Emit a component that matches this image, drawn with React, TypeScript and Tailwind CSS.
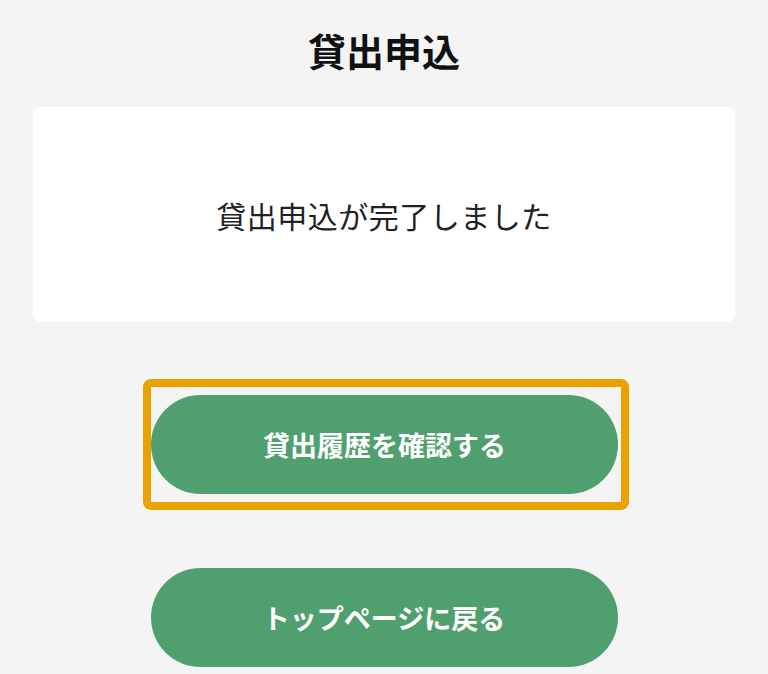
export default function App() {
  const font = { fontFamily: '"Noto Sans CJK JP", "Noto Sans", sans-serif' };
  return (
    <div className="min-h-[674px] w-full bg-[#f4f4f4] flex flex-col items-center" style={font}>
      <h1 className="mt-[26px] h-[48px] flex items-center text-[38px] leading-none font-bold text-[#111]">貸出申込</h1>
      <div className="mt-[33px] w-[702px] h-[215px] bg-white rounded-[8px] flex items-center justify-center">
        <p className="text-[30px] leading-none text-[#222] tracking-[0.5px]">貸出申込が完了しました</p>
      </div>
      <div className="mt-[57px] ml-[4px] w-[486px] border-[8px] border-[#e9a300] rounded-[8px] py-[8px] flex">
        <button className="w-[467px] h-[99px] rounded-full bg-[#50a06f] text-white text-[27px] font-bold leading-none flex items-center justify-center">
          貸出履歴を確認する
        </button>
      </div>
      <button className="mt-[58px] w-[467px] h-[99px] rounded-full bg-[#50a06f] text-white text-[27px] font-bold leading-none flex items-center justify-center">
        トップページに戻る
      </button>
    </div>
  );
}
